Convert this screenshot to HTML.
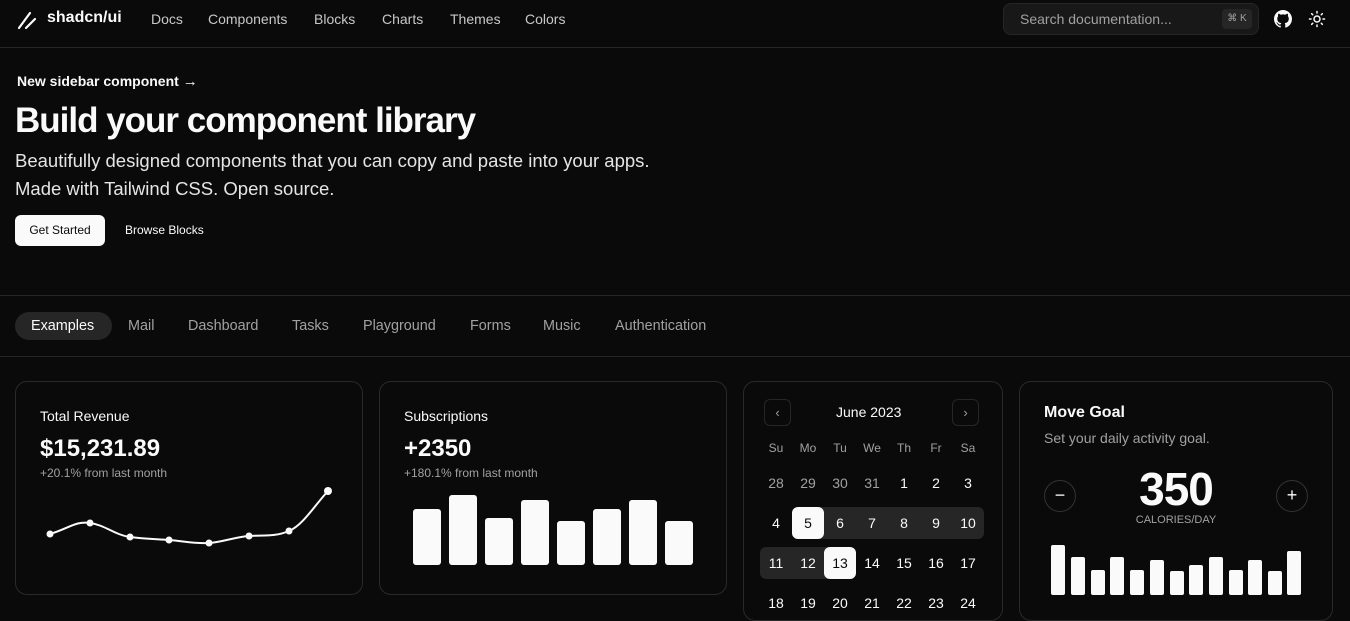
<!DOCTYPE html>
<html><head><meta charset="utf-8"><style>
*{box-sizing:border-box;margin:0;padding:0}
body{width:1350px;height:613px;overflow:hidden;background:#0a0a0a;color:#fafafa;font-family:"Liberation Sans",sans-serif;position:relative}
.abs{position:absolute}
.nav a{position:absolute;top:11px;font-size:14px;color:#c8c8c8}
.hr{position:absolute;left:0;width:1350px;height:1px;background:#262626}
.card{position:absolute;border:1px solid #2a2a2a;border-radius:12px;background:#0a0a0a}
.tab{position:absolute;top:318px;font-size:14.4px;color:#a1a1a1}
.cal span{position:absolute;width:32px;text-align:center;font-size:14px}
</style></head><body>
<svg class="abs" style="left:16px;top:9px" width="22" height="22" viewBox="0 0 22 22"><path d="M3 19L14 4M10 19L19 10" stroke="#fafafa" stroke-width="2.2" stroke-linecap="round"/></svg>
<div class="abs" style="left:47px;top:9px;font-size:16px;font-weight:bold">shadcn/ui</div>
<div class="nav"><a style="left:151px">Docs</a><a style="left:208px">Components</a><a style="left:314px">Blocks</a><a style="left:382px">Charts</a><a style="left:450px">Themes</a><a style="left:525px">Colors</a></div>
<div class="abs" style="left:1003px;top:3px;width:256px;height:32px;background:#181818;border:1px solid #262626;border-radius:8px"></div>
<div class="abs" style="left:1020px;top:11px;font-size:14px;color:#a1a1a1">Search documentation...</div>
<div class="abs" style="left:1222px;top:9px;width:30px;height:20px;background:#262626;border-radius:4px;font-size:10px;color:#a1a1a1;text-align:center;line-height:20px">⌘ K</div>
<svg class="abs" style="left:1274px;top:10px" width="18" height="18" viewBox="0 0 16 16"><path fill="#fafafa" d="M8 0C3.58 0 0 3.58 0 8c0 3.54 2.290 6.53 5.47 7.59.4.07.55-.17.55-.38v-1.33c-2.23.48-2.7-1.070-2.7-1.070-.36-.92-.89-1.170-.89-1.170-.73-.5.05-.49.05-.49.81.06 1.230.83 1.230.83.72 1.230 1.880.87 2.340.67.07-.52.28-.87.51-1.070-1.780-.2-3.640-.89-3.640-3.950 0-.87.31-1.590.82-2.150-.08-.2-.36-1.020.08-2.120 0 0 .67-.21 2.2.82a7.6 7.6 0 014 0c1.530-1.040 2.2-.82 2.2-.82.44 1.1.16 1.920.08 2.120.51.56.82 1.270.82 2.150 0 3.070-1.870 3.750-3.650 3.950.29.25.54.73.54 1.480v2.2c0 .21.15.46.55.38A8 8 0 0016 8c0-4.420-3.580-8-8-8z"/></svg>
<svg class="abs" style="left:1308px;top:10px" width="18" height="18" viewBox="0 0 24 24" fill="none" stroke="#fafafa" stroke-width="2" stroke-linecap="round"><circle cx="12" cy="12" r="4"/><path d="M12 2v2M12 20v2M4.9 4.9l1.4 1.4M17.7 17.7l1.4 1.4M2 12h2M20 12h2M6.3 17.7l-1.4 1.4M19.1 4.9l-1.4 1.4"/></svg>
<div class="hr" style="top:47px"></div>
<div class="abs" style="left:17px;top:73px;font-size:14px;font-weight:bold">New sidebar component <span style="font-size:15px">→</span></div>
<div class="abs" style="left:15px;top:101px;font-size:35px;font-weight:bold;letter-spacing:-1px">Build your component library</div>
<div class="abs" style="left:15px;top:147px;font-size:18.5px;color:#e5e5e5;line-height:28px">Beautifully designed components that you can copy and paste into your apps.<br>Made with Tailwind CSS. Open source.</div>
<div class="abs" style="left:15px;top:215px;width:90px;height:31px;background:#fafafa;border-radius:6px;color:#0a0a0a;font-size:12px;text-align:center;line-height:31px">Get Started</div>
<div class="abs" style="left:125px;top:223px;font-size:12px">Browse Blocks</div>
<div class="hr" style="top:295px"></div>
<div class="abs" style="left:15px;top:312px;width:97px;height:28px;background:#262626;border-radius:14px"></div>
<div class="tab" style="left:31px;color:#fafafa">Examples</div>
<div class="tab" style="left:128px">Mail</div><div class="tab" style="left:188px">Dashboard</div><div class="tab" style="left:292px">Tasks</div><div class="tab" style="left:363px">Playground</div><div class="tab" style="left:470px">Forms</div><div class="tab" style="left:543px">Music</div><div class="tab" style="left:615px">Authentication</div>
<div class="hr" style="top:356px"></div>
<div class="card" style="left:15px;top:381px;width:348px;height:214px"></div>
<div class="abs" style="left:40px;top:408px;font-size:14px">Total Revenue</div>
<div class="abs" style="left:40px;top:435px;font-size:24px;font-weight:bold">$15,231.89</div>
<div class="abs" style="left:40px;top:466px;font-size:12px;color:#a1a1a1">+20.1% from last month</div>
<svg class="abs" style="left:0;top:0" width="363" height="600"><path d="M50 534C70 528 75 521 90 523S115 535 130 537S155 539 169 540S195 544 209 543S235 537 249 536S275 537 289 531S315 505 328 491" fill="none" stroke="#fafafa" stroke-width="2"/><g fill="#fafafa"><circle cx="50" cy="534" r="3.5"/><circle cx="90" cy="523" r="3.5"/><circle cx="130" cy="537" r="3.5"/><circle cx="169" cy="540" r="3.5"/><circle cx="209" cy="543" r="3.5"/><circle cx="249" cy="536" r="3.5"/><circle cx="289" cy="531" r="3.5"/><circle cx="328" cy="491" r="4"/></g></svg>
<div class="card" style="left:379px;top:381px;width:348px;height:214px"></div>
<div class="abs" style="left:404px;top:408px;font-size:14px">Subscriptions</div>
<div class="abs" style="left:404px;top:435px;font-size:24px;font-weight:bold">+2350</div>
<div class="abs" style="left:404px;top:466px;font-size:12px;color:#a1a1a1">+180.1% from last month</div>
<svg class="abs" style="left:0;top:0" width="730" height="600" fill="#fafafa"><rect x="413" y="509" width="28" height="56" rx="3"/><rect x="449" y="495" width="28" height="70" rx="3"/><rect x="485" y="518" width="28" height="47" rx="3"/><rect x="521" y="500" width="28" height="65" rx="3"/><rect x="557" y="521" width="28" height="44" rx="3"/><rect x="593" y="509" width="28" height="56" rx="3"/><rect x="629" y="500" width="28" height="65" rx="3"/><rect x="665" y="521" width="28" height="44" rx="3"/></svg>
<div class="card" style="left:743px;top:381px;width:260px;height:240px"></div>
<div class="abs" style="left:764px;top:399px;width:27px;height:27px;border:1px solid #262626;border-radius:6px;text-align:center;line-height:25px;color:#a1a1a1;font-size:13px">‹</div>
<div class="abs" style="left:952px;top:399px;width:27px;height:27px;border:1px solid #262626;border-radius:6px;text-align:center;line-height:25px;color:#a1a1a1;font-size:13px">›</div>
<div class="abs" style="left:836px;top:404px;font-size:14px">June 2023</div>
<div class="abs" style="left:792px;top:507px;width:192px;height:32px;background:#262626;border-radius:6px"></div>
<div class="abs" style="left:760px;top:547px;width:96px;height:32px;background:#262626;border-radius:6px"></div>
<div class="abs" style="left:792px;top:507px;width:32px;height:32px;background:#fafafa;border-radius:6px"></div>
<div class="abs" style="left:824px;top:547px;width:32px;height:32px;background:#fafafa;border-radius:6px"></div>
<div class="cal">
<span style="left:760px;top:441px;font-size:12px;color:#a1a1a1">Su</span><span style="left:792px;top:441px;font-size:12px;color:#a1a1a1">Mo</span><span style="left:824px;top:441px;font-size:12px;color:#a1a1a1">Tu</span><span style="left:856px;top:441px;font-size:12px;color:#a1a1a1">We</span><span style="left:888px;top:441px;font-size:12px;color:#a1a1a1">Th</span><span style="left:920px;top:441px;font-size:12px;color:#a1a1a1">Fr</span><span style="left:952px;top:441px;font-size:12px;color:#a1a1a1">Sa</span>
<span style="left:760px;top:475px;color:#a1a1a1">28</span><span style="left:792px;top:475px;color:#a1a1a1">29</span><span style="left:824px;top:475px;color:#a1a1a1">30</span><span style="left:856px;top:475px;color:#a1a1a1">31</span><span style="left:888px;top:475px">1</span><span style="left:920px;top:475px">2</span><span style="left:952px;top:475px">3</span>
<span style="left:760px;top:515px">4</span><span style="left:792px;top:515px;color:#0a0a0a">5</span><span style="left:824px;top:515px">6</span><span style="left:856px;top:515px">7</span><span style="left:888px;top:515px">8</span><span style="left:920px;top:515px">9</span><span style="left:952px;top:515px">10</span>
<span style="left:760px;top:555px">11</span><span style="left:792px;top:555px">12</span><span style="left:824px;top:555px;color:#0a0a0a">13</span><span style="left:856px;top:555px">14</span><span style="left:888px;top:555px">15</span><span style="left:920px;top:555px">16</span><span style="left:952px;top:555px">17</span>
<span style="left:760px;top:595px">18</span><span style="left:792px;top:595px">19</span><span style="left:824px;top:595px">20</span><span style="left:856px;top:595px">21</span><span style="left:888px;top:595px">22</span><span style="left:920px;top:595px">23</span><span style="left:952px;top:595px">24</span>
</div>
<div class="card" style="left:1019px;top:381px;width:314px;height:240px"></div>
<div class="abs" style="left:1044px;top:404px;font-size:16px;font-weight:bold">Move Goal</div>
<div class="abs" style="left:1044px;top:430px;font-size:14px;color:#a1a1a1">Set your daily activity goal.</div>
<div class="abs" style="left:1044px;top:480px;width:32px;height:32px;border:1px solid #333;border-radius:50%;text-align:center;line-height:29px;font-size:18px">−</div>
<div class="abs" style="left:1276px;top:480px;width:32px;height:32px;border:1px solid #333;border-radius:50%;text-align:center;line-height:29px;font-size:18px">+</div>
<div class="abs" style="left:1076px;top:462px;width:200px;text-align:center;font-size:46px;font-weight:bold;letter-spacing:-1px">350</div>
<div class="abs" style="left:1076px;top:514px;width:200px;text-align:center;font-size:11px;color:#a1a1a1">CALORIES/DAY</div>
<svg class="abs" style="left:0;top:0" width="1350" height="613" fill="#fafafa"><rect x="1051" y="545" width="14" height="50" rx="2"/><rect x="1071" y="557" width="14" height="38" rx="2"/><rect x="1091" y="570" width="14" height="25" rx="2"/><rect x="1110" y="557" width="14" height="38" rx="2"/><rect x="1130" y="570" width="14" height="25" rx="2"/><rect x="1150" y="560" width="14" height="35" rx="2"/><rect x="1170" y="571" width="14" height="24" rx="2"/><rect x="1189" y="565" width="14" height="30" rx="2"/><rect x="1209" y="557" width="14" height="38" rx="2"/><rect x="1229" y="570" width="14" height="25" rx="2"/><rect x="1248" y="560" width="14" height="35" rx="2"/><rect x="1268" y="571" width="14" height="24" rx="2"/><rect x="1287" y="551" width="14" height="44" rx="2"/></svg>
</body></html>
